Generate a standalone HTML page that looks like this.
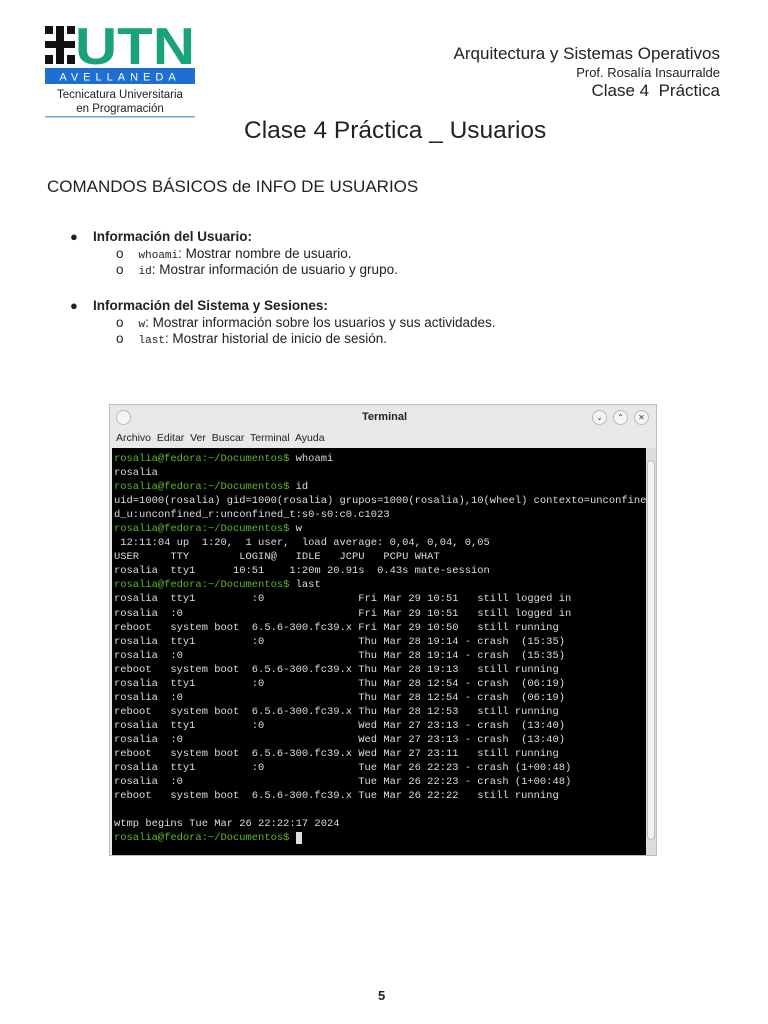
<!DOCTYPE html>
<html><head><meta charset="utf-8"><style>
body{margin:0;width:768px;height:1024px;background:#fff;position:relative;font-family:"Liberation Sans",sans-serif;color:#222;overflow:hidden}
.a{position:absolute;white-space:nowrap}
.term{position:absolute;left:109px;top:404px;width:548px;height:452px;background:#e8e8e8;border:1px solid #bbb;box-sizing:border-box}
.scr{position:absolute;left:2px;top:43px;width:534px;height:407px;background:#000}
.sb{position:absolute;left:536px;top:43px;width:10px;height:407px;background:#ddd}
pre{position:absolute;left:2px;top:4px;margin:0;font-family:"Liberation Mono",monospace;font-size:10.45px;line-height:14.04px;color:#ddd}
.g{color:#5fb72a}
.btn{position:absolute;top:5px;width:13px;height:13px;border-radius:50%;border:1px solid #bbb;background:#f4f4f4;font-size:8px;text-align:center;line-height:13px;color:#444}
</style></head><body>
<svg class="a" style="left:45px;top:24px" width="152" height="95">
<g fill="#111"><rect x="0" y="2" width="8" height="8"/><rect x="22" y="2" width="8" height="8"/><rect x="11" y="2" width="8" height="38"/><rect x="0" y="17" width="30" height="7"/><rect x="0" y="31" width="8" height="9"/><rect x="22" y="31" width="8" height="9"/></g>
<text x="30" y="40" font-family="Liberation Sans" font-weight="bold" font-size="52" fill="#1aa37a" textLength="120" lengthAdjust="spacingAndGlyphs">UTN</text>
<rect x="0" y="44" width="150" height="16" fill="#1e6fcf"/>
<text x="75" y="56.5" text-anchor="middle" font-family="Liberation Sans" font-size="11" fill="#fff" letter-spacing="5">AVELLANEDA</text>
<text x="75" y="74" text-anchor="middle" font-family="Liberation Sans" font-size="11.5" fill="#222">Tecnicatura Universitaria</text>
<text x="75" y="88" text-anchor="middle" font-family="Liberation Sans" font-size="11.5" fill="#222">en Programación</text>
<rect x="0" y="92" width="150" height="1.5" fill="#6aa6e0"/>
</svg>
<div class="a" style="right:48px;top:44px;font-size:17px">Arquitectura y Sistemas Operativos</div>
<div class="a" style="right:48px;top:65px;font-size:13px">Prof. Rosalía Insaurralde</div>
<div class="a" style="right:48px;top:81px;font-size:17px">Clase 4&nbsp; Práctica</div>
<div class="a" style="left:244px;top:117px;font-size:24.5px">Clase 4 Práctica _ Usuarios</div>
<div class="a" style="left:47px;top:177px;font-size:17px">COMANDOS BÁSICOS de INFO DE USUARIOS</div>
<div class="a" style="left:70px;top:229px;font-size:13px">●</div>
<div class="a" style="left:93px;top:229px;font-size:13.5px;font-weight:bold">Información del Usuario:</div>
<div class="a" style="left:116px;top:246px;font-size:13.5px">o&nbsp;&nbsp;&nbsp;&nbsp;<span style="font-family:'Liberation Mono';font-size:11px">whoami</span>: Mostrar nombre de usuario.</div>
<div class="a" style="left:116px;top:262px;font-size:13.5px">o&nbsp;&nbsp;&nbsp;&nbsp;<span style="font-family:'Liberation Mono';font-size:11px">id</span>: Mostrar información de usuario y grupo.</div>
<div class="a" style="left:70px;top:298px;font-size:13px">●</div>
<div class="a" style="left:93px;top:298px;font-size:13.5px;font-weight:bold">Información del Sistema y Sesiones:</div>
<div class="a" style="left:116px;top:315px;font-size:13.5px">o&nbsp;&nbsp;&nbsp;&nbsp;<span style="font-family:'Liberation Mono';font-size:11px">w</span>: Mostrar información sobre los usuarios y sus actividades.</div>
<div class="a" style="left:116px;top:331px;font-size:13.5px">o&nbsp;&nbsp;&nbsp;&nbsp;<span style="font-family:'Liberation Mono';font-size:11px">last</span>: Mostrar historial de inicio de sesión.</div>
<div class="term">
<div class="btn" style="left:6px"></div>
<div class="a" style="left:252px;top:6px;font-size:11px;font-weight:bold">Terminal</div>
<div class="btn" style="left:482px">⌄</div><div class="btn" style="left:503px">⌃</div><div class="btn" style="left:524px">✕</div>
<div class="a" style="left:6px;top:27px;font-size:10.5px">Archivo&nbsp; Editar&nbsp; Ver&nbsp; Buscar&nbsp; Terminal&nbsp; Ayuda</div>
<div class="scr"><pre><span class="g">rosalia@fedora:~/Documentos$</span> whoami
rosalia
<span class="g">rosalia@fedora:~/Documentos$</span> id
uid=1000(rosalia) gid=1000(rosalia) grupos=1000(rosalia),10(wheel) contexto=unconfine
d_u:unconfined_r:unconfined_t:s0-s0:c0.c1023
<span class="g">rosalia@fedora:~/Documentos$</span> w
 12:11:04 up  1:20,  1 user,  load average: 0,04, 0,04, 0,05
USER     TTY        LOGIN@   IDLE   JCPU   PCPU WHAT
rosalia  tty1      10:51    1:20m 20.91s  0.43s mate-session
<span class="g">rosalia@fedora:~/Documentos$</span> last
rosalia  tty1         :0               Fri Mar 29 10:51   still logged in
rosalia  :0                            Fri Mar 29 10:51   still logged in
reboot   system boot  6.5.6-300.fc39.x Fri Mar 29 10:50   still running
rosalia  tty1         :0               Thu Mar 28 19:14 - crash  (15:35)
rosalia  :0                            Thu Mar 28 19:14 - crash  (15:35)
reboot   system boot  6.5.6-300.fc39.x Thu Mar 28 19:13   still running
rosalia  tty1         :0               Thu Mar 28 12:54 - crash  (06:19)
rosalia  :0                            Thu Mar 28 12:54 - crash  (06:19)
reboot   system boot  6.5.6-300.fc39.x Thu Mar 28 12:53   still running
rosalia  tty1         :0               Wed Mar 27 23:13 - crash  (13:40)
rosalia  :0                            Wed Mar 27 23:13 - crash  (13:40)
reboot   system boot  6.5.6-300.fc39.x Wed Mar 27 23:11   still running
rosalia  tty1         :0               Tue Mar 26 22:23 - crash (1+00:48)
rosalia  :0                            Tue Mar 26 22:23 - crash (1+00:48)
reboot   system boot  6.5.6-300.fc39.x Tue Mar 26 22:22   still running

wtmp begins Tue Mar 26 22:22:17 2024
<span class="g">rosalia@fedora:~/Documentos$</span> <span style="background:#ddd"> </span></pre></div>
<div class="sb"><div style="position:absolute;left:1px;top:12px;width:8px;height:380px;background:#f2f2f2;border:1px solid #bbb;border-radius:4px;box-sizing:border-box"></div></div>
</div>
<div class="a" style="left:378px;top:988px;font-size:13px;font-weight:bold">5</div>
</body></html>
